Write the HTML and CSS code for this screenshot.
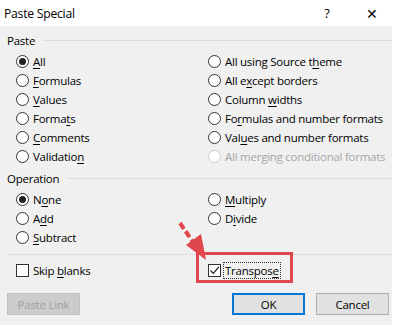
FILE: index.html
```html
<!DOCTYPE html>
<html lang="en">

<head>
    <meta charset="UTF-8">
    <title>Paste Special</title>
    <link rel="stylesheet" href="styles.css">
</head>

<body>
    <div class="dialog">
        <div class="titlebar">
            <span class="title">Paste Special</span>
            <span class="help">?</span>
            <span class="close">&#x2715;</span>
        </div>

        <div class="content">
            <div class="group-label first"><span>Paste</span></div>
            <div class="options">
                <div class="opt"><span class="radio on"></span><span><u>A</u>ll</span></div>
                <div class="opt"><span class="radio"></span><span>All using Source t<u>h</u>eme</span></div>
                <div class="opt"><span class="radio"></span><span><u>F</u>ormulas</span></div>
                <div class="opt"><span class="radio"></span><span>All e<u>x</u>cept borders</span></div>
                <div class="opt"><span class="radio"></span><span><u>V</u>alues</span></div>
                <div class="opt"><span class="radio"></span><span>Column <u>w</u>idths</span></div>
                <div class="opt"><span class="radio"></span><span>Forma<u>t</u>s</span></div>
                <div class="opt"><span class="radio"></span><span>Fo<u>r</u>mulas and number formats</span></div>
                <div class="opt"><span class="radio"></span><span><u>C</u>omments</span></div>
                <div class="opt"><span class="radio"></span><span>Val<u>u</u>es and number formats</span></div>
                <div class="opt"><span class="radio"></span><span>Validatio<u>n</u></span></div>
                <div class="opt disabled"><span class="radio"></span><span>All mer<u>g</u>ing conditional formats</span></div>
            </div>

            <div class="group-label"><span>Operation</span></div>
            <div class="options">
                <div class="opt"><span class="radio on"></span><span>N<u>o</u>ne</span></div>
                <div class="opt"><span class="radio"></span><span><u>M</u>ultiply</span></div>
                <div class="opt"><span class="radio"></span><span>A<u>d</u>d</span></div>
                <div class="opt"><span class="radio"></span><span>D<u>i</u>vide</span></div>
                <div class="opt"><span class="radio"></span><span><u>S</u>ubtract</span></div>
            </div>

            <div class="separator"></div>

            <div class="options checks">
                <div class="opt"><span class="check"></span><span>Skip <u>b</u>lanks</span></div>
                <div class="opt"><span class="check">
                        <svg width="11" height="11" viewBox="0 0 11 11">
                            <path d="M1.5 5.5 L4.3 8.3 L9.8 2" fill="none" stroke="#222" stroke-width="1.2" />
                        </svg></span><span class="focus">Transpos<u>e</u></span></div>
            </div>

            <div class="buttons">
                <a class="btn btn-disabled"><span>Paste Link</span></a>
                <span class="spacer"></span>
                <a class="btn btn-default"><span>OK</span></a>
                <a class="btn"><span>Cancel</span></a>
            </div>

            <!-- annotation drawn over the dialog -->
            <div class="highlight"></div>
            <svg class="arrow" width="40" height="50" viewBox="0 0 40 50">
                <path d="M3 3 L16 22" stroke="#e0474c" stroke-width="4" stroke-dasharray="7 3" />
                <path d="M9 25 L24 14 L29 40 Z" fill="#e0474c" />
            </svg>
        </div>
    </div>
</body>

</html>
```

FILE: styles.css
```css
body {
    margin: 0;
    padding: 0;
    background: #ffffff;
    font-family: 'Open Sans', 'Noto Sans', sans-serif;
    font-size: 11.5px;
    letter-spacing: -0.25px;
    color: #000000;
}

.dialog {
    width: 392px;
    height: 325px;
}

.titlebar {
    width: 398px;
    height: 26px;
    display: flex;
    align-items: center;
    background: #ffffff;
}

.title {
    padding-left: 4px;
    font-size: 12.2px;
    flex: 1;
}

.help {
    width: 12px;
    font-size: 13px;
    margin-right: 30px;
}

.close {
    font-size: 14px;
    margin-right: 20px;
}

.content {
    position: relative;
    background: #f0f0f0;
    height: 299px;
    padding: 0 0 0 7px;
    box-sizing: border-box;
}

.group-label {
    display: flex;
    align-items: center;
    height: 24px;
}

.group-label.first {
    padding-top: 2px;
}

.group-label span {
    padding-right: 8px;
}

.group-label::after {
    content: "";
    flex: 1;
    height: 1px;
    background: #dcdcdc;
}

.options {
    display: grid;
    grid-template-columns: 192px 1fr;
    grid-auto-rows: 19px;
    padding-left: 9px;
}

.opt {
    display: flex;
    align-items: center;
    gap: 4px;
    white-space: nowrap;
}

.opt u {
    text-decoration-thickness: 1px;
    text-underline-offset: 2px;
}

.radio {
    width: 11px;
    height: 11px;
    border: 1px solid #333333;
    border-radius: 50%;
    background: #ffffff;
    display: flex;
    align-items: center;
    justify-content: center;
}

.radio.on::after {
    content: "";
    width: 7px;
    height: 7px;
    border-radius: 50%;
    background: #222222;
}

.disabled {
    color: #a6a6a6;
}

.disabled .radio {
    border-color: #cccccc;
}

.separator {
    height: 1px;
    background: #dcdcdc;
    margin: 7px 0 7px 0;
}

.checks {
    grid-auto-rows: 16px;
}

.check {
    width: 11px;
    height: 11px;
    border: 1px solid #333333;
    background: #ffffff;
    display: flex;
}

.focus {
    outline: 1px dotted #333333;
    padding: 0 1px;
    margin-left: -1px;
}

.buttons {
    display: flex;
    gap: 11px;
    margin-top: 15px;
    padding-right: 3px;
}

.spacer {
    flex: 1;
}

.btn {
    width: 73px;
    height: 22px;
    box-sizing: border-box;
    display: flex;
    align-items: center;
    justify-content: center;
    background: #e1e1e1;
    border: 1px solid #adadad;
    text-decoration: none;
}

.btn-default {
    border: 2px solid #0078d7;
}

.btn-disabled {
    background: #cccccc;
    border-color: #bfbfbf;
    color: #a0a0a0;
}

.highlight {
    position: absolute;
    left: 196px;
    top: 226px;
    width: 91px;
    height: 25px;
    border: 3px solid #e0474c;
}

.arrow {
    position: absolute;
    left: 177px;
    top: 194px;
}
```
